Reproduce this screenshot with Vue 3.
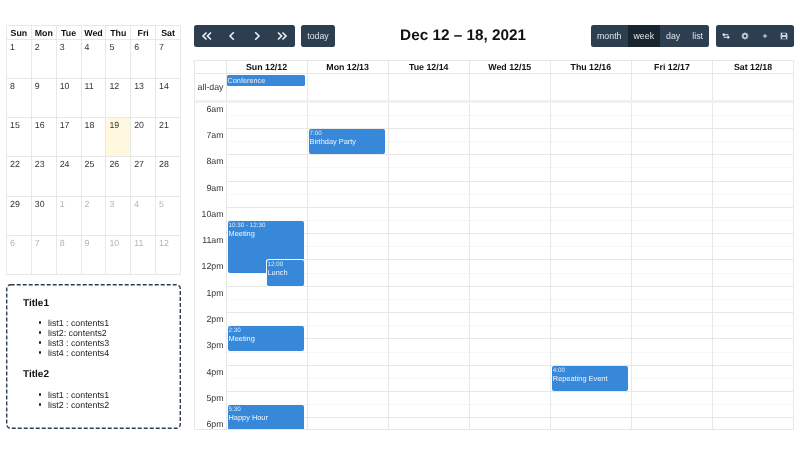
<script setup>
const miniHead = ['Sun', 'Mon', 'Tue', 'Wed', 'Thu', 'Fri', 'Sat']
const miniWeeks = [
  [1, 2, 3, 4, 5, 6, 7],
  [8, 9, 10, 11, 12, 13, 14],
  [15, 16, 17, 18, 19, 20, 21],
  [22, 23, 24, 25, 26, 27, 28],
  [29, 30, 1, 2, 3, 4, 5],
  [6, 7, 8, 9, 10, 11, 12]
]
const isOther = (w, d) => (w === 4 && d > 1) || w === 5
const isToday = (w, d) => w === 2 && d === 4

const days = ['Sun 12/12', 'Mon 12/13', 'Tue 12/14', 'Wed 12/15', 'Thu 12/16', 'Fri 12/17', 'Sat 12/18']
const hours = ['6am', '7am', '8am', '9am', '10am', '11am', '12pm', '1pm', '2pm', '3pm', '4pm', '5pm', '6pm']

const HOUR = 26.3
const place = (start, end) => ({ top: (start - 6) * HOUR + 'px', height: (end - start) * HOUR - 1.1 + 'px' })
const events = [
  { day: 0, start: 10.5, end: 12.5, time: '10:30 - 12:30', title: 'Meeting' },
  { day: 0, start: 12, end: 13, time: '12:00', title: 'Lunch', nested: true },
  { day: 0, start: 14.5, end: 15.5, time: '2:30', title: 'Meeting' },
  { day: 0, start: 17.5, end: 19, time: '5:30', title: 'Happy Hour' },
  { day: 1, start: 7, end: 8, time: '7:00', title: 'Birthday Party' },
  { day: 4, start: 16, end: 17, time: '4:00', title: 'Repeating Event' }
]
const eventsOn = (i) => events.filter((e) => e.day === i)
</script>

<template>
  <div class="page">
    <aside class="side">
      <table class="mini">
        <thead>
          <tr><th v-for="h in miniHead" :key="h">{{ h }}</th></tr>
        </thead>
        <tbody>
          <tr v-for="(week, w) in miniWeeks" :key="w">
            <td
              v-for="(d, i) in week"
              :key="i"
              :class="{ other: isOther(w, i), today: isToday(w, i) }"
            >{{ d }}</td>
          </tr>
        </tbody>
      </table>
      <section class="notes">
        <svg class="dash" viewBox="0 0 175 145"><rect x="0.7" y="0.7" width="173.6" height="143.6" rx="4" /></svg>
        <h3>Title1</h3>
        <ul>
          <li>list1 : contents1</li>
          <li>list2: contents2</li>
          <li>list3 : contents3</li>
          <li>list4 : contents4</li>
        </ul>
        <h3>Title2</h3>
        <ul>
          <li>list1 : contents1</li>
          <li>list2 : contents2</li>
        </ul>
      </section>
    </aside>

    <main class="cal">
      <header class="toolbar">
        <div class="tools">
          <div class="group">
            <button class="nav"><svg viewBox="0 0 12 12"><path d="M5.500 2.500 2 6l3.500 3.500M10 2.500 6.500 6l3.500 3.500" /></svg></button>
            <button class="nav"><svg viewBox="0 0 12 12"><path d="M7.800 2.200 4 6l3.800 3.800" /></svg></button>
            <button class="nav"><svg viewBox="0 0 12 12"><path d="M4.200 2.200 8 6 4.200 9.800" /></svg></button>
            <button class="nav"><svg viewBox="0 0 12 12"><path d="M2 2.500 5.500 6 2 9.500M6.500 2.500 10 6l-3.500 3.500" /></svg></button>
          </div>
          <button class="today">today</button>
        </div>
        <h2 class="title">Dec 12 – 18, 2021</h2>
        <div class="tools wide">
          <div class="group">
            <button>month</button>
            <button class="active">week</button>
            <button>day</button>
            <button>list</button>
          </div>
          <div class="group icons">
            <button><svg viewBox="0 0 12 12"><path d="M1.500 4h8M3.500 2 1.500 4l2 2M10.500 8h-8M8.500 6l2 2-2 2" /></svg></button>
            <button><svg viewBox="0 0 12 12"><circle cx="6" cy="6" r="3.200" stroke-width="1.700" /><path d="M6 .8v1.400M6 9.800v1.400M.8 6h1.400M9.800 6h1.400M2.300 2.300l1 1M8.700 8.700l1 1M2.300 9.700l1-1M8.700 3.300l1-1" /></svg></button>
            <button><svg viewBox="0 0 12 12"><path d="M6 2.800v6.400M2.800 6h6.400" stroke-width="1.300" /></svg></button>
            <button><svg viewBox="0 0 12 12"><path class="solid" d="M1 1h8.500L11 2.500V11H1zM3.500 2v3h5V2zM3 7.500V10h6V7.500z" fill-rule="evenodd" /></svg></button>
          </div>
        </div>
      </header>

      <div class="grid">
        <div class="head row">
          <div class="axis"></div>
          <div v-for="d in days" :key="d" class="day-head">{{ d }}</div>
        </div>
        <div class="allday row">
          <div class="axis allday-label">all-day</div>
          <div v-for="(d, i) in days" :key="d" class="allday-cell">
            <div v-if="i === 0" class="banner">Conference</div>
          </div>
        </div>
        <div class="divider"></div>
        <div class="body">
          <div class="times row">
            <div class="axis hours">
              <div v-for="h in hours" :key="h" class="hour-label">{{ h }}</div>
            </div>
            <div v-for="(d, i) in days" :key="d" class="col">
              <div v-for="h in hours" :key="h" class="hour"><span></span></div>
              <div
                v-for="e in eventsOn(i)"
                :key="e.time"
                class="event"
                :class="{ nested: e.nested }"
                :style="place(e.start, e.end)"
              >
                <div class="ev-time">{{ e.time }}</div>
                <div class="ev-title">{{ e.title }}</div>
              </div>
            </div>
          </div>
        </div>
      </div>
    </main>
  </div>
</template>

<style>
html, body { margin: 0; background: #fff; }
</style>

<style scoped>
.page {
  width: 800px;
  height: 450px;
  box-sizing: border-box;
  padding: 25px 6px 20px;
  display: flex;
  gap: 13px;
  overflow: hidden;
  font-family: "Liberation Sans", Arial, sans-serif;
  font-size: 8.8px;
  color: #222;
  text-rendering: geometricPrecision;
  will-change: transform;
}
.side { width: 175px; flex: none; display: flex; flex-direction: column; gap: 9px; }

.mini {
  width: 175px;
  height: 250px;
  table-layout: fixed;
  border-collapse: collapse;
  flex: none;
}
.mini th, .mini td { border: 1px solid #e8e8e8; padding: 0; }
.mini th { height: 13px; font-weight: 700; text-align: center; color: #111; }
.mini td { height: 38.3px; vertical-align: top; padding: 2px 0 0 3px; color: #333; box-sizing: border-box; }
.mini td.other { color: #b5b5b5; }
.mini td.today { background: #fff8de; }

.notes {
  position: relative;
  height: 145px;
  flex: none;
  box-sizing: border-box;
  padding: 13.500px 17px;
  line-height: 10px;
  color: #222;
}
.notes h3 { margin: 0 0 8.300px; font-size: 10px; line-height: 12px; font-weight: 700; color: #111; }
.notes ul { margin: 0 0 11.700px; padding: 0 0 0 25px; list-style: none; }
.notes li { position: relative; }
.notes li::before {
  content: "";
  position: absolute;
  left: -9.500px;
  top: 3.700px;
  width: 2.600px;
  height: 2.600px;
  border-radius: 50%;
  background: #222;
}

.cal { width: 600px; flex: none; display: flex; flex-direction: column; gap: 13px; min-height: 0; }
.toolbar { display: flex; justify-content: space-between; align-items: center; height: 22px; flex: none; }
.tools { display: flex; gap: 6px; }
.tools.wide { gap: 7px; }
.group { display: flex; border-radius: 2.500px; overflow: hidden; }
button {
  height: 22px;
  border: 0;
  margin: 0;
  background: #2c3e50;
  color: #fff;
  font: inherit;
  padding: 0 6px;
  display: flex;
  align-items: center;
  justify-content: center;
}
.today { width: 34px; border-radius: 2.500px; padding: 0; background: #2c3e50; color: #dfe3e6; }
.group button { color: #e2e6e9; }
.nav { width: 25.250px; padding: 0; }
.nav svg { width: 12px; height: 12px; }
.active, .group button.active { background: #1a252f; }
.title { margin: 0; font-size: 15.300px; font-weight: 700; color: #111; }
.icons button { width: 19.500px; padding: 0; }
.icons svg { width: 8px; height: 8px; }
svg { fill: none; stroke: #eef1f3; stroke-width: 1.600; }
.dash { position: absolute; inset: 0; width: 175px; height: 145px; fill: none; stroke: #2c3e50; stroke-width: 1.400; stroke-dasharray: 4 2; }
svg .solid { fill: #d9dee2; stroke: none; }

.grid { flex: none; height: 370px; display: flex; flex-direction: column; border: 1px solid #e8e8e8; box-sizing: border-box; overflow: hidden; }
.row { display: flex; }
.axis { width: 30.500px; flex: none; box-sizing: border-box; }
.head { height: 13px; flex: none; }
.day-head { flex: 1; min-width: 0; border-left: 1px solid #e8e8e8; border-bottom: 1px solid #e8e8e8; text-align: center; font-weight: 700; line-height: 12px; color: #111; }
.head .axis { border-bottom: 1px solid #e8e8e8; }
.allday { height: 26px; flex: none; }
.allday-label { text-align: right; padding-right: 2px; line-height: 26px; color: #333; }
.allday-cell { flex: 1; min-width: 0; border-left: 1px solid #e8e8e8; padding-top: 1px; box-sizing: border-box; }
.banner { height: 11px; margin-right: 1.500px; background: #3788d8; border-radius: 1.500px; color: #e8f1fa; font-size: 7.300px; line-height: 11.500px; padding-left: 1px; }
.divider { height: 2.700px; flex: none; background: #f0f0f0; }
.body { flex: 1; min-height: 0; overflow: hidden; }
.times { align-items: flex-start; }
.hours { display: flex; flex-direction: column; }
.hour-label { height: 26.300px; box-sizing: border-box; text-align: right; padding: 1px 2px 0 0; line-height: 10px; color: #333; }
.col { flex: 1; min-width: 0; position: relative; border-left: 1px solid #e8e8e8; }
.hour { height: 26.300px; box-sizing: border-box; border-bottom: 1px solid #e8e8e8; }
.hour span { display: block; height: 13.150px; box-sizing: border-box; border-bottom: 1px dotted #f2f2f2; }
.event {
  position: absolute;
  left: 1px;
  right: 2.500px;
  background: #3788d8;
  border: 1px solid #3788d8;
  border-radius: 1.500px;
  color: #f2f6fb;
  box-sizing: border-box;
  overflow: hidden;
}
.nested { left: 40px; box-shadow: 0 0 0 1px #f4f8fc; z-index: 1; overflow: visible; }
.ev-time { font-size: 6.300px; line-height: 7px; color: #dceafa; }
.ev-title { font-size: 7.400px; line-height: 9.500px; }
</style>
